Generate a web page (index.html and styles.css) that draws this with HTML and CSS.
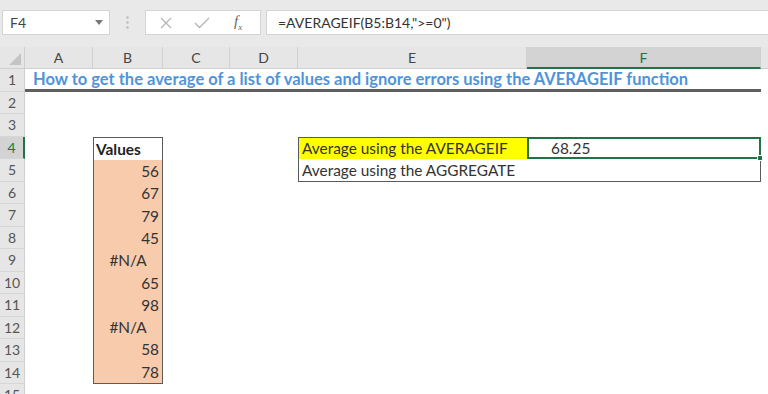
FILE: index.html
```html
<!DOCTYPE html>
<html lang="en">
  <head>
    <meta charset="UTF-8" />
    <meta name="viewport" content="width=device-width, initial-scale=1.0" />
    <title>AVERAGEIF ignore errors</title>
    <link rel="stylesheet" href="styles.css">
  </head>
  <body>
    <header class="toolbar">
      <div class="namebox">
        <span>F4</span>
        <svg class="caret" width="8" height="5" viewBox="0 0 8 5"><polygon points="0,0 8,0 4,5" fill="#777" /></svg>
      </div>
      <div class="grip">
        <svg width="3" height="13" viewBox="0 0 3 13"><circle cx="1.5" cy="1.5" r="1.2" fill="#bbb" /><circle cx="1.5" cy="6.5" r="1.2" fill="#bbb" /><circle cx="1.5" cy="11.5" r="1.2" fill="#bbb" /></svg>
      </div>
      <div class="fxbox">
        <svg width="12" height="12" viewBox="0 0 12 12"><path d="M1 1 L11 11 M11 1 L1 11" stroke="#b5b5b5" stroke-width="1.3" fill="none" /></svg>
        <svg width="16" height="12" viewBox="0 0 16 12"><path d="M1 6 L5.5 10.5 L15 1" stroke="#b5b5b5" stroke-width="1.3" fill="none" /></svg>
        <span class="fx"><i>f</i><sub>x</sub></span>
      </div>
      <div class="formula">=AVERAGEIF(B5:B14,"&gt;=0")</div>
    </header>

    <main class="sheet">
      <!-- kolonne-overskrifter -->
      <div class="corner">
        <svg width="12" height="12" viewBox="0 0 12 12"><polygon points="12,0 12,12 0,12" fill="#c4c4c4" /></svg>
      </div>
      <div class="colhead">A</div>
      <div class="colhead">B</div>
      <div class="colhead">C</div>
      <div class="colhead">D</div>
      <div class="colhead">E</div>
      <div class="colhead aktiv">F</div>
      <div class="colhead rest"></div>

      <!-- række-numre -->
      <div class="rows">
        <div class="rh">1</div>
        <div class="rh">2</div>
        <div class="rh">3</div>
        <div class="rh aktiv">4</div>
        <div class="rh">5</div>
        <div class="rh">6</div>
        <div class="rh">7</div>
        <div class="rh">8</div>
        <div class="rh">9</div>
        <div class="rh">10</div>
        <div class="rh">11</div>
        <div class="rh">12</div>
        <div class="rh">13</div>
        <div class="rh">14</div>
        <div class="rh">15</div>
      </div>

      <div class="title">How to get the average of a list of values and ignore errors using the AVERAGEIF function</div>

      <div class="values">
        <div class="cell head">Values</div>
        <div class="cell num">56</div>
        <div class="cell num">67</div>
        <div class="cell num">79</div>
        <div class="cell num">45</div>
        <div class="cell err">#N/A</div>
        <div class="cell num">65</div>
        <div class="cell num">98</div>
        <div class="cell err">#N/A</div>
        <div class="cell num">58</div>
        <div class="cell num">78</div>
      </div>

      <div class="calc">
        <div class="calcrow">
          <div class="cell label gul">Average using the AVERAGEIF</div>
          <div class="cell result valgt">68.25<span class="handle"></span></div>
        </div>
        <div class="calcrow">
          <div class="cell label">Average using the AGGREGATE</div>
          <div class="cell result"></div>
        </div>
      </div>
    </main>
  </body>
</html>
```

FILE: styles.css
```css
* {
  margin: 0;
  padding: 0;
  box-sizing: border-box;
}

body {
  width: 768px;
  height: 394px;
  overflow: hidden;
  background-color: #ffffff;
  font-family: Lato, "Open Sans", sans-serif;
  font-size: 15.4px;
  color: #333;
}

/* formel-linjen øverst */
.toolbar {
  height: 47px;
  background-color: #e9e9e9;
  display: flex;
  align-items: flex-start;
  padding: 10px 0 0 2px;
  font-size: 14px;
}

.namebox {
  width: 108px;
  height: 25px;
  background-color: #fff;
  border: 1px solid #d4d4d4;
  display: flex;
  align-items: center;
  justify-content: space-between;
  padding: 0 6px 0 7px;
  color: #444;
}

.grip {
  width: 35px;
  height: 25px;
  display: flex;
  align-items: center;
  justify-content: center;
}

.fxbox {
  width: 116px;
  height: 25px;
  background-color: #fff;
  border: 1px solid #d4d4d4;
  display: flex;
  align-items: center;
  gap: 22px;
  padding-left: 14px;
}

.fx {
  font-family: "Liberation Serif", serif;
  font-size: 15px;
  color: #666;
  margin-left: 2px;
}

.fx sub {
  font-size: 9px;
  font-style: italic;
}

.formula {
  flex: 1;
  height: 25px;
  margin-left: 5px;
  background-color: #fff;
  border: 1px solid #d4d4d4;
  border-right: none;
  padding-left: 11px;
  display: flex;
  align-items: center;
  color: #333;
}

/* selve regnearket */
.sheet {
  display: grid;
  grid-template-columns: 25px 68px 70px 67px 68px 229px 234px 1fr;
  grid-template-rows: 22px repeat(15, 22.5px);
}

.corner {
  background-color: #e6e6e6;
  border-right: 1px solid #cfcfcf;
  border-bottom: 1px solid #cfcfcf;
  display: flex;
  align-items: flex-end;
  justify-content: flex-end;
  padding: 0 3px 3px 0;
}

.colhead {
  background-color: #e6e6e6;
  border-right: 1px solid #d0d0d0;
  border-bottom: 1px solid #cfcfcf;
  display: flex;
  align-items: center;
  justify-content: center;
  color: #444;
  font-size: 14px;
}

.colhead.aktiv {
  background-color: #d3d3d3;
  border-bottom: 2px solid #217346;
  color: #217346;
}

.colhead.rest {
  border-right: none;
}

.rows {
  grid-column: 1;
  grid-row: 2 / 17;
  display: flex;
  flex-direction: column;
}

.rh {
  height: 22.5px;
  flex-shrink: 0;
  background-color: #e6e6e6;
  border-right: 1px solid #cfcfcf;
  border-bottom: 1px solid #d6d6d6;
  display: flex;
  align-items: center;
  justify-content: center;
  color: #555;
  font-size: 14px;
}

.rh.aktiv {
  background-color: #d3d3d3;
  border-right: 2px solid #217346;
  color: #217346;
}

.title {
  grid-column: 2 / 8;
  grid-row: 2;
  border-bottom: 3px solid #5f5f5f;
  padding: 1px 0 0 8px;
  display: flex;
  align-items: center;
  color: #4f94d9;
  font-size: 16.5px;
  font-weight: 700;
  white-space: nowrap;
}

.cell {
  flex: 1;
  display: flex;
  align-items: center;
  padding: 0 3px;
  white-space: nowrap;
}

/* kolonne B */
.values {
  grid-column: 3;
  grid-row: 5 / 16;
  border: 1px solid #5a5a5a;
  display: flex;
  flex-direction: column;
}

.values .cell {
  background-color: #f8cbad;
}

.values .head {
  background-color: #fff;
  font-weight: 700;
  color: #222;
  padding-left: 2px;
}

.num {
  justify-content: flex-end;
}

.err {
  justify-content: center;
}

/* kolonne E og F */
.calc {
  grid-column: 6 / 8;
  grid-row: 5 / 7;
  border: 1px solid #5a5a5a;
  display: flex;
  flex-direction: column;
}

.calcrow {
  flex: 1;
  display: flex;
}

.label {
  flex: 0 0 228px;
}

.gul {
  background-color: #ffff00;
}

.result {
  position: relative;
  padding-left: 22px;
}

.valgt {
  border: 2px solid #217346;
  margin: -1px -1px 0 0;
}

.handle {
  position: absolute;
  right: -4px;
  bottom: -4px;
  width: 6px;
  height: 6px;
  background-color: #217346;
  border: 1px solid #fff;
}
```
